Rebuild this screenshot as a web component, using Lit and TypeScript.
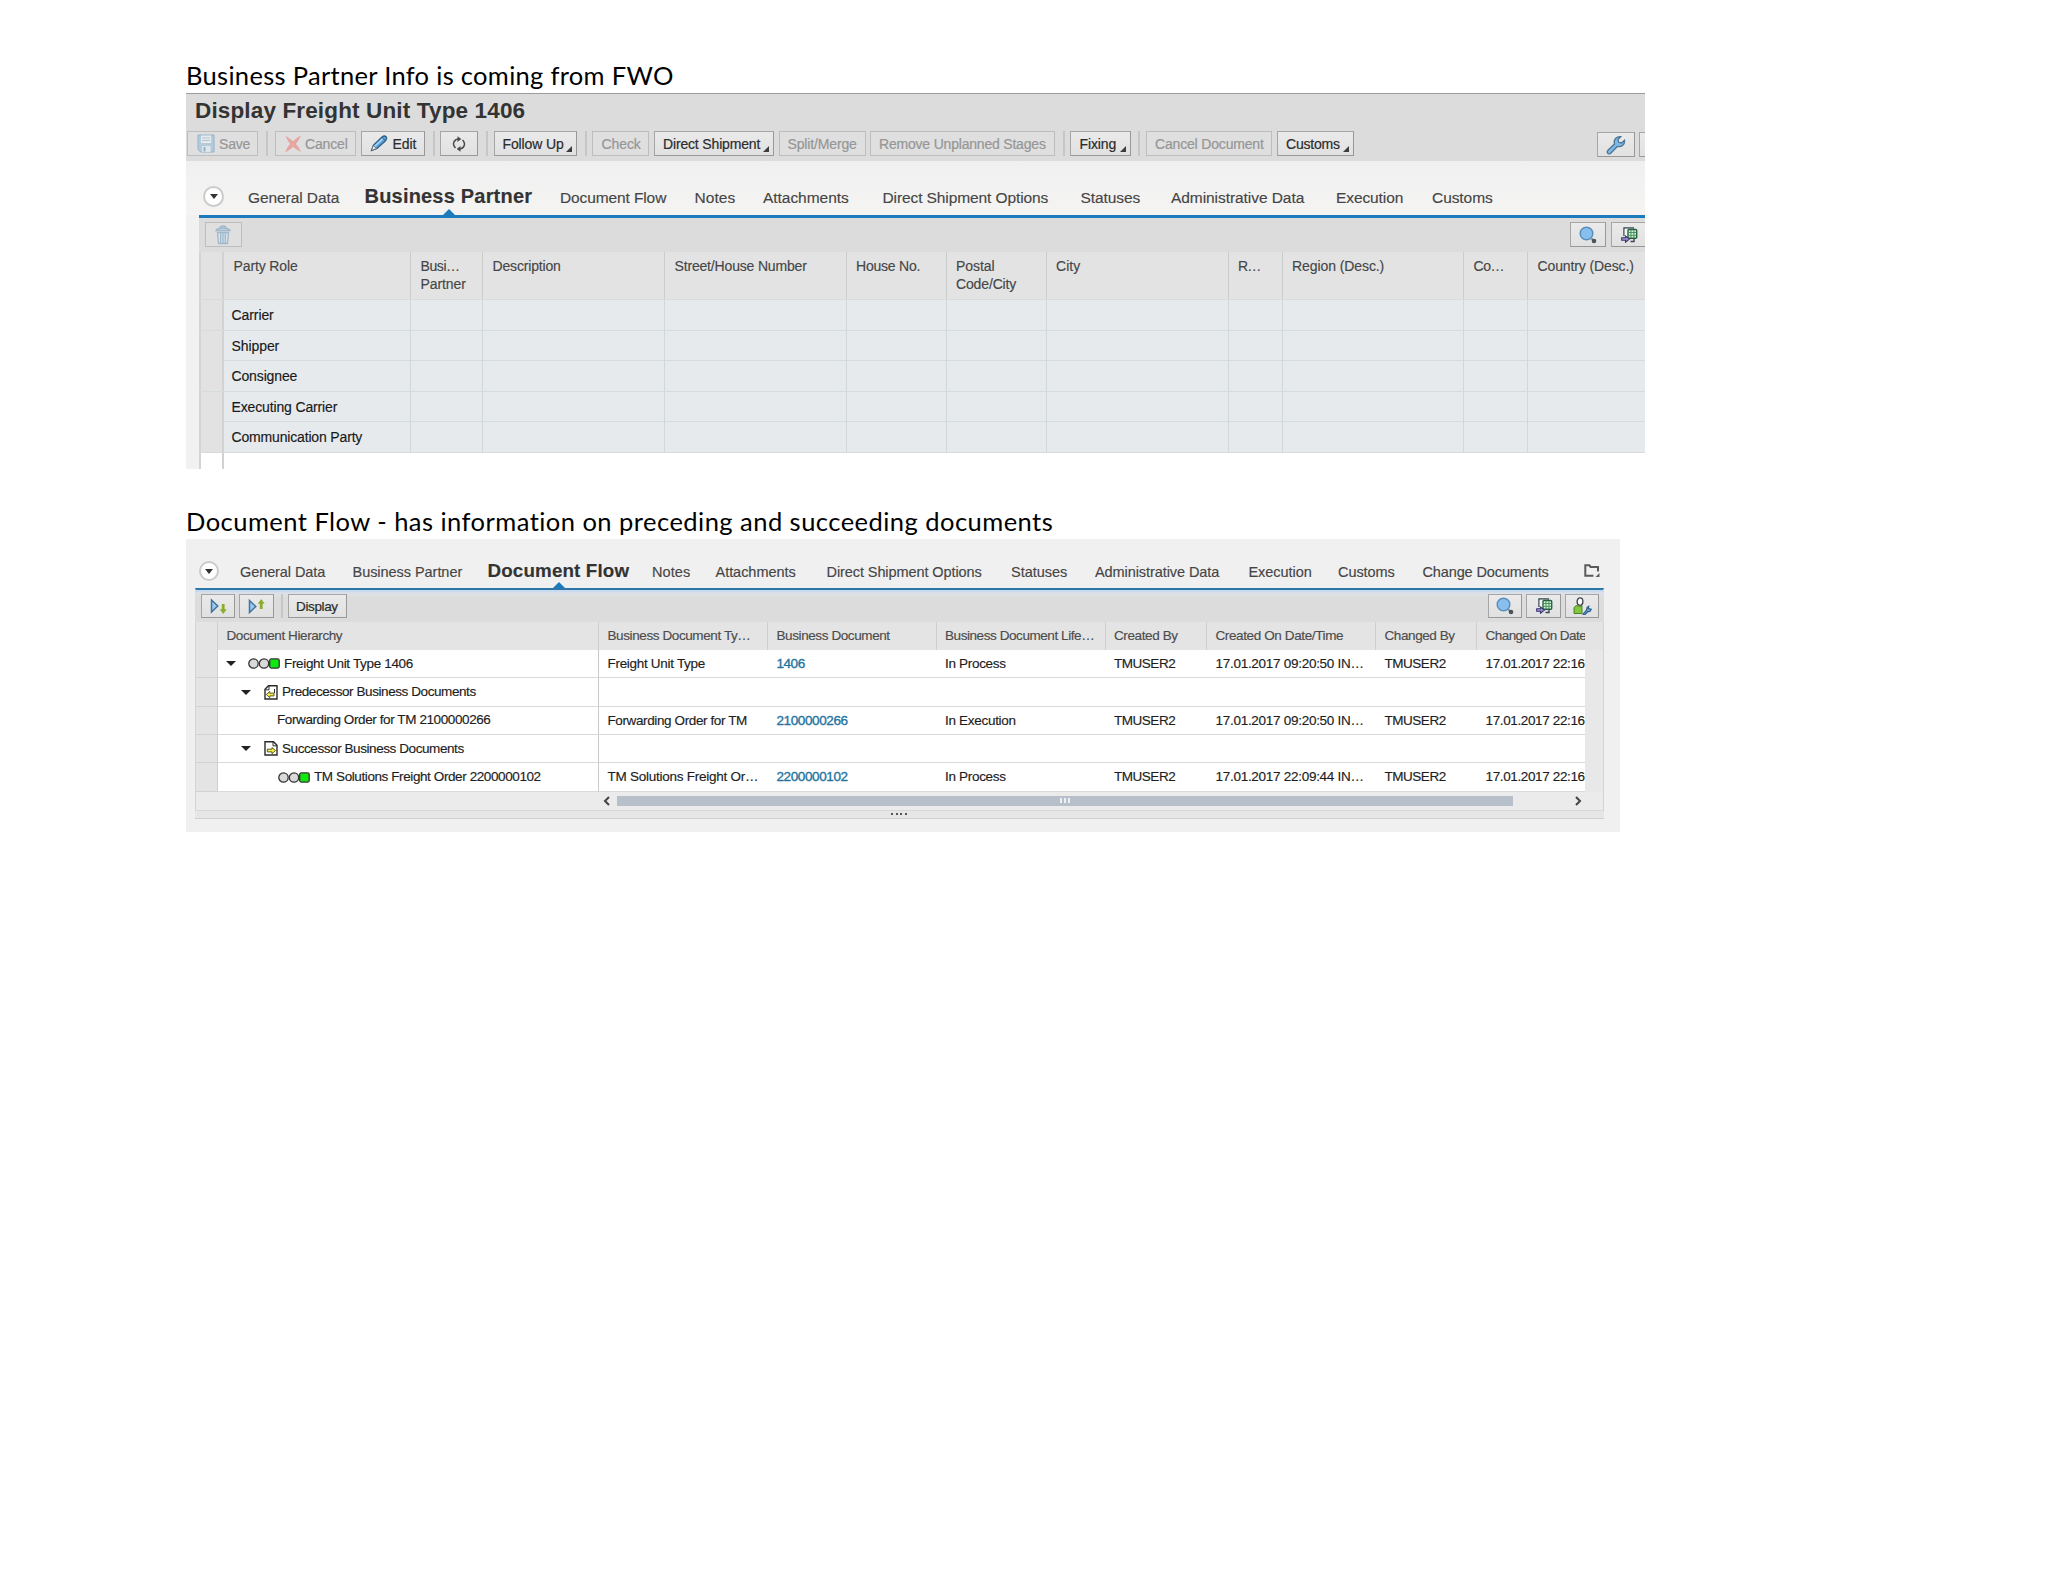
import { LitElement, html, css, svg, nothing } from "lit";
import { customElement, property } from "lit/decorators.js";

const SANS = '"Liberation Sans", Arial, sans-serif';
const ctx = document.createElement("canvas").getContext("2d")!;

/** Letter spacing that makes a label take the given width. */
function spacing(text: string, width: number, size: number, weight = 400, family = SANS): string {
  ctx.font = `${weight} ${size}px ${family}`;
  const natural = ctx.measureText(text).width;
  return `letter-spacing:${((width + 1.2 - natural) / text.length).toFixed(3)}px`;
}

type Label = [text: string, start: number, end: number];
type Tool = {
  sep?: boolean; at: number; w?: number; text?: string; tx?: number; tw?: number;
  icon?: string; ix?: number; off?: boolean; menu?: boolean; drop?: number;
};

const icons: Record<string, unknown> = {
  save: html`<svg width="18" height="19" viewBox="0 0 18 19">${svg`<path d="M1 1h16v17H3.5L1 15.5z" fill="#b4cbdc" stroke="#93b2ca"/><rect x="4" y="1.5" width="10" height="7.5" fill="#e4eaed"/><path d="M5 4h8M5 6.500h8" stroke="#b4c4cf"/><rect x="5" y="12" width="8.5" height="6" fill="#dfe7eb"/><rect x="6.5" y="13" width="2" height="4.5" fill="#93b2ca"/>`}</svg>`,
  cancel: html`<svg width="16" height="16" viewBox="0 0 16 16">${svg`<path d="M2 1.5Q6 4 8 6.5Q11 3 14.5 1Q12.5 5 10 8Q13 11 14.5 14.5Q11 12.500 8 9.700Q5 13 1.500 15Q3 11 6 8Q3.500 5 2 1.500z" fill="#e9aca7" stroke="#e5a39d" stroke-width="1.300"/>`}</svg>`,
  edit: html`<svg width="18" height="17" viewBox="0 0 18 17">${svg`<path d="M1.500 15.500L3.500 10L12 2Q14.500 0 16.300 2Q17.300 4 15.300 6L7 13.500z" fill="#5fa3d6" stroke="#2c5d86" stroke-width="1.200"/><path d="M4.500 11.500L13 3.500" stroke="#b9dcf5" stroke-width="1.300"/><path d="M12 2.500L15.500 5.700" stroke="#2c5d86"/><path d="M1.500 15.500L3.300 10.500L6.500 13.500z" fill="#f3f3f3" stroke="#555" stroke-width=".700"/>`}</svg>`,
  refresh: html`<svg width="16" height="16" viewBox="0 0 16 16">${svg`<g fill="none" stroke="#4a4a4a" stroke-width="1.500"><path d="M4.500 12Q1.500 9 3 5.800Q4.500 3 8 3"/><path d="M11.500 4Q14.500 7 13 10.200Q11.500 13 8 13"/></g><path d="M6.500 .200L10.300 3L6.500 6zM9.500 10L5.700 13L9.500 15.800z" fill="#4a4a4a"/>`}</svg>`,
  wrench: html`<svg width="20" height="20" viewBox="0 0 20 20">${svg`<path d="M2 18.500Q.500 17 2 15.300L8.500 9Q7.500 5.500 10 3Q12 1.200 14.800 1.700L12 4.500L12.700 7.300L15.500 8L18.500 5.200Q19 8.300 16.800 10.200Q14.500 12.300 11.300 11.500L5 18Q3.500 19.500 2 18.500z" fill="#7db9e6" stroke="#4d7594" stroke-width="1.300"/>`}</svg>`,
  trash: html`<svg width="16" height="20" viewBox="0 0 16 20">${svg`<g fill="none" stroke="#9fb9cb" stroke-width="1.300"><path d="M5 3Q5 1 8 1T11 3M1 5.500Q2 3 8 3T15 5.500z" fill="#c6d8e3"/><path d="M2.500 7.500L3.500 18.500H12.500L13.500 7.500z" fill="#d6e2ea"/><path d="M5.700 8v10M8 8v10M10.300 8v10"/></g>`}</svg>`,
  search: html`<svg width="18" height="18" viewBox="0 0 18 18">${svg`<path d="M12.500 12.500L13.500 13.500" stroke="#6b8494" stroke-width="2"/><circle cx="15" cy="15" r="2.300" fill="#4c5358"/><circle cx="7.500" cy="7.500" r="6.300" fill="#86bff0" stroke="#5c8fb8" stroke-width="1.500"/>`}</svg>`,
  export: html`<svg width="17" height="16" viewBox="0 0 17 16">${svg`<path d="M3 9V1H13M9.500 14.500H13V11" fill="none" stroke="#3b4854" stroke-width="1.400"/><path d="M3.700 1.700H12V10H9L6 8.500H3.700z" fill="#f6f8f8"/><rect x="7" y="2.500" width="8.700" height="8.700" rx="1" fill="#d3f0d5" stroke="#24613c" stroke-width="1.400"/><path d="M7.500 5.500h8M7.500 8.300h8M10 3v8M12.900 3v8" stroke="#3d8a57" stroke-width=".900"/><path d="M.700 10.800H4.500V9L8.500 12L4.500 15.200V13.300H.700z" fill="#9a92cf" stroke="#38386f" stroke-width="1.100"/>`}</svg>`,
  person: html`<svg width="19" height="18" viewBox="0 0 19 18">${svg`<path d="M1 16.500V11Q1.500 9 4 8.500L6.500 9.700L9 8.700V16.500z" fill="#84c541" stroke="#4a8523"/><ellipse cx="7" cy="4.600" rx="2.900" ry="3.700" fill="#fff" stroke="#39424a" stroke-width="1.300"/><path d="M10 17.200L13.800 13Q13.200 10.400 15.700 9.300L15.300 11.600L18.200 12.300Q17.500 14.800 15 14.500L11.800 17.700Z" fill="#6fb1e3" stroke="#2e618c" stroke-width="1.200"/>`}</svg>`,
  down: html`<svg width="17" height="17" viewBox="0 0 17 17">${svg`<path d="M1.500 2L7.800 8L1.500 14z" fill="#9cc9ee" stroke="#41749c" stroke-width="1.500"/><path d="M13.200 6v6" stroke="#8aae2c" stroke-width="2.800"/><path d="M9.800 11.300H16.700L13.200 16z" fill="#8aae2c"/>`}</svg>`,
  up: html`<svg width="17" height="17" viewBox="0 0 17 17">${svg`<path d="M1.500 2.500L7.800 8.500L1.500 14.500z" fill="#9cc9ee" stroke="#41749c" stroke-width="1.500"/><path d="M13.200 5v6" stroke="#8aae2c" stroke-width="2.800"/><path d="M9.800 5.700H16.700L13.200 1z" fill="#8aae2c"/>`}</svg>`,
  lights: html`<svg width="32" height="11" viewBox="0 0 32 11">${svg`<g stroke="#333" stroke-width="1.300"><circle cx="5.500" cy="5.500" r="4.700" fill="#d9d9d9"/><circle cx="16" cy="5.500" r="4.700" fill="#d9d9d9"/><rect x="21.700" y=".900" width="9.500" height="9.200" rx="1.500" fill="#0ee90e"/></g>`}</svg>`,
  pred: html`<svg width="14" height="15" viewBox="0 0 14 15">${svg`<path d="M4.500 .800H13V14H1V4.300z" fill="#fff" stroke="#2a2a2a" stroke-width="1.400"/><path d="M5 1V4.800H1.300" fill="none" stroke="#2a2a2a"/><path d="M2.300 9.500L5.800 6.500V8.200H10V10.900H5.800V12.700z" fill="#f4f04a" stroke="#4c4a1a" stroke-width=".900"/><path d="M10.500 4V8" stroke="#333"/>`}</svg>`,
  succ: html`<svg width="14" height="15" viewBox="0 0 14 15">${svg`<path d="M1 .800H9.500L13 4.300V14H1z" fill="#fff" stroke="#2a2a2a" stroke-width="1.400"/><path d="M9 1V4.800H12.700" fill="none" stroke="#2a2a2a"/><path d="M11.500 9.500L8 6.500V8.200H3.300V10.900H8V12.700z" fill="#f4f04a" stroke="#4c4a1a" stroke-width=".900"/>`}</svg>`,
  folder: html`<svg width="16" height="14" viewBox="0 0 16 14">${svg`<path d="M9.500 11.800H1.300V1.300H5.500L6.500 3H14V7.500" fill="none" stroke="#5a5a5a" stroke-width="2"/><path d="M15.500 9V13H11.500z" fill="#5a5a5a"/>`}</svg>`,
};

const bars = {
  main: [
    { at: 1, w: 71, off: true, icon: "save", ix: 10, text: "Save", tx: 33, tw: 30 },
    { sep: true, at: 80 },
    { at: 89, w: 81, off: true, icon: "cancel", ix: 10, text: "Cancel", tx: 31, tw: 41.5 },
    { at: 175, w: 64, icon: "edit", ix: 9, text: "Edit", tx: 32.5, tw: 22.5 },
    { sep: true, at: 247 },
    { at: 254, w: 38, icon: "refresh", ix: 11 },
    { sep: true, at: 300 },
    { at: 308, w: 83, text: "Follow Up", tx: 9.5, tw: 60, menu: true },
    { sep: true, at: 399 },
    { at: 406, w: 57, off: true, text: "Check", tx: 10.5, tw: 38 },
    { at: 468, w: 120, text: "Direct Shipment", tx: 10, tw: 96, menu: true },
    { at: 593, w: 87, off: true, text: "Split/Merge", tx: 9.5, tw: 68 },
    { at: 684, w: 185, off: true, text: "Remove Unplanned Stages", tx: 10, tw: 165.5 },
    { sep: true, at: 877 },
    { at: 884, w: 61, text: "Fixing", tx: 10.5, tw: 35.5, menu: true },
    { sep: true, at: 952 },
    { at: 960, w: 126, off: true, text: "Cancel Document", tx: 10, tw: 107.5 },
    { at: 1091, w: 77, text: "Customs", tx: 10, tw: 52.5, menu: true },
    { at: 1411, w: 38, icon: "wrench", ix: 9, drop: 1 },
    { at: 1453, w: 38, drop: 1 },
  ] as Tool[],
  partner: [
    { at: 6, w: 37, off: true, icon: "trash", ix: 10 },
    { at: 1371, w: 36, icon: "search", ix: 9 },
    { at: 1412, w: 38, icon: "export", ix: 10 },
  ] as Tool[],
  flow: [
    { at: 6, w: 34, icon: "down", ix: 9 },
    { at: 44, w: 35, icon: "up", ix: 9 },
    { sep: true, at: 86 },
    { at: 93, w: 59, text: "Display", tx: 9, tw: 40.500 },
    { at: 1293, w: 34, icon: "search", ix: 8 },
    { at: 1331, w: 35, icon: "export", ix: 10 },
    { at: 1370, w: 34, icon: "person", ix: 8 },
  ] as Tool[],
};

const partnerTabs: Label[] = [
  ["General Data", 63, 153], ["Business Partner", 179.5, 346], ["Document Flow", 375, 480],
  ["Notes", 509.5, 549], ["Attachments", 578, 662.5], ["Direct Shipment Options", 697.5, 862],
  ["Statuses", 895.5, 954], ["Administrative Data", 986, 1118], ["Execution", 1151, 1217], ["Customs", 1247, 1306.5],
];
const flowTabs: Label[] = [
  ["General Data", 55, 139], ["Business Partner", 167.5, 276], ["Document Flow", 302.5, 443],
  ["Notes", 467, 504], ["Attachments", 530.5, 609.5], ["Direct Shipment Options", 641.5, 795.5],
  ["Statuses", 826, 881], ["Administrative Data", 910, 1033], ["Execution", 1063.5, 1125.5],
  ["Customs", 1153, 1208.5], ["Change Documents", 1237.5, 1362.5],
];

const partnerHead: [string, number][][] = [
  [["Party Role", 63]], [["Busi…", 38], ["Partner", 44]], [["Description", 67]],
  [["Street/House Number", 131]], [["House No.", 63]], [["Postal", 37.5], ["Code/City", 59]],
  [["City", 23]], [["R…", 21]], [["Region (Desc.)", 91]], [["Co…", 29.5]], [["Country (Desc.)", 95]],
];
const partnerRows: [string, number][] = [
  ["Carrier", 41], ["Shipper", 46.5], ["Consignee", 64.5], ["Executing Carrier", 104.5], ["Communication Party", 129.5],
];

const flowHead: [string, number][] = [
  ["Document Hierarchy", 114.5], ["Business Document Ty…", 142], ["Business Document", 112],
  ["Business Document Life…", 148], ["Created By", 62.5], ["Created On Date/Time", 126.5],
  ["Changed By", 69], ["Changed On Date", 99.5],
];
type FlowRow = { pad: number; arrow?: boolean; icon?: string; gap?: number; label: [string, number]; cells: [string, number][] };
const user: [string, number] = ["TMUSER2", 60];
const changed: [string, number] = ["17.01.2017 22:16", 98];
const flowRows: FlowRow[] = [
  { pad: 7.5, arrow: true, icon: "lights", gap: 12.5, label: ["Freight Unit Type 1406", 128],
    cells: [["Freight Unit Type", 96.5], ["1406", 27], ["In Process", 59.5], user, ["17.01.2017 09:20:50 IN…", 147], user, changed] },
  { pad: 22.5, arrow: true, icon: "pred", gap: 13, label: ["Predecessor Business Documents", 192.5], cells: [] },
  { pad: 59, label: ["Forwarding Order for TM 2100000266", 212.5],
    cells: [["Forwarding Order for TM", 138.5], ["2100000266", 70], ["In Execution", 69.5], user, ["17.01.2017 09:20:50 IN…", 147], user, changed] },
  { pad: 22.5, arrow: true, icon: "succ", gap: 13, label: ["Successor Business Documents", 180.5], cells: [] },
  { pad: 60, icon: "lights", label: ["TM Solutions Freight Order 2200000102", 225.5],
    cells: [["TM Solutions Freight Or…", 149.5], ["2200000102", 70], ["In Process", 59.5], user, ["17.01.2017 22:09:44 IN…", 147], user, changed] },
];

const shared = css`
  :host { display: block; font-family: "Liberation Sans", Arial, sans-serif; }
  * { box-sizing: border-box; }
  svg { display: block; flex: none; }
  span { white-space: nowrap; }
`;

@customElement("tool-bar")
export class ToolBar extends LitElement {
  @property({ attribute: false }) items: Tool[] = [];
  @property({ type: Number }) size = 14;
  static styles = [shared, css`
    .bar { display: flex; align-items: flex-start; overflow: hidden; }
    .btn { display: flex; align-items: center; flex: none; height: var(--btn-h, 25px); border: 1px solid #a6a6a6; border-right-color: #989898; border-bottom-color: #989898;
      background: linear-gradient(#eaeaea, #e1e1e1); color: #2c2c2c; position: relative; -webkit-text-stroke: 0.2px currentColor; }
    .off { border-color: #bdbdbd; background: #dfdfdf; color: #969696; }
    .drop { margin-top: 1px; }
    .sep { flex: none; width: 2px; height: var(--btn-h, 25px); background: #c6c6c6; }
    .corner { position: absolute; right: 4px; bottom: 3px; width: 0; height: 0; border-left: 6px solid transparent; border-bottom: 6px solid #3c3c3c; }
  `];
  render() {
    let end = 0;
    return html`<div class="bar">${this.items.map((t) => {
      const gap = t.at - end;
      end = t.at + (t.sep ? 2 : t.w!);
      if (t.sep) return html`<div class="sep" style="margin-left:${gap}px"></div>`;
      const textGap = t.text ? t.tx! - 2 - (t.icon ? t.ix! + (t.icon === "cancel" ? 15 : 17) : 0) : 0;
      return html`<div class="btn ${t.off ? "off" : ""} ${t.drop ? "drop" : ""}" style="margin-left:${gap}px;width:${t.w}px">
        ${t.icon ? html`<div style="margin-left:${t.ix! - 1}px">${icons[t.icon]}</div>` : nothing}
        ${t.text ? html`<span style="margin-left:${textGap}px;font-size:${this.size}px;${spacing(t.text, t.tw!, this.size)}">${t.text}</span>` : nothing}
        ${t.menu ? html`<i class="corner"></i>` : nothing}
      </div>`;
    })}</div>`;
  }
}

@customElement("tab-strip")
export class TabStrip extends LitElement {
  @property({ attribute: false }) tabs: Label[] = [];
  @property() active = "";
  @property({ type: Boolean, reflect: true }) small = false;
  static styles = [shared, css`
    .strip { display: flex; align-items: flex-start; height: 54px; padding: 20px 0 0 17px; color: #454545; }
    .tab { flex: none; font-size: 15.5px; line-height: 33px; position: relative; height: 34px; -webkit-text-stroke: 0.15px currentColor; }
    .on { font-size: 20px; font-weight: 700; line-height: 31px; color: #333; }
    .on::after { content: ""; position: absolute; left: calc(50% - 6px); bottom: 0; border: 6px solid transparent; border-top: 0; border-bottom: 6px solid #1b7bbd; }
    .menu { flex: none; width: 21px; height: 21px; margin-top: 5px; border-radius: 50%; border: 2px solid #cbcbcb; background: #fff; display: flex; align-items: center; justify-content: center; }
    .menu::after { content: ""; border: 4.5px solid transparent; border-top: 5px solid #333; border-bottom: 0; }
    .folder { margin: 6px 0 0 35px; }
    :host([small]) .strip { height: 49px; padding: 19px 0 0 13px; }
    :host([small]) .tab { font-size: 14.5px; line-height: 28px; height: 30px; }
    :host([small]) .on { font-size: 18.8px; line-height: 25px; }
    :host([small]) .menu { width: 20px; height: 20px; margin-top: 3px; }
  `];
  render() {
    const small = this.small;
    let end = small ? 33 : 38;
    return html`<div class="strip"><div class="menu"></div>${this.tabs.map(([text, a, b]) => {
      const on = text === this.active;
      const size = on ? (small ? 18.8 : 20) : small ? 14.5 : 15.5;
      const gap = a - 1 - end;
      end = b + 0.5;
      return html`<div class="tab ${on ? "on" : ""}" style="margin-left:${gap}px;width:${b - a + 1.5}px"><span style=${spacing(text, b - a, size, on ? 700 : 400)}>${text}</span></div>`;
    })}${small ? html`<div class="folder">${icons.folder}</div>` : nothing}</div>`;
  }
}

@customElement("app-root")
export class AppRoot extends LitElement {
  static styles = [shared, css`
    :host { background: #fff; min-height: 1582px; padding: 57px 0 0 186px; }
    .note { font-family: Lato, sans-serif; font-size: 25.5px; line-height: 36px; height: 36px; color: #000; }
    .second { margin-top: 34px; }
    .partner { width: 1459px; height: 376px; overflow: hidden; background: #f1f1f1; border-top: 1px solid #9c9c9c; }
    .title { height: 34px; line-height: 34px; font-size: 22.5px; font-weight: 700; color: #333; padding-left: 9px; background: #dcdcdc; }
    .actions { height: 33px; padding-top: 3px; background: #dcdcdc; }
    .partner tab-strip { background: linear-gradient(#f0f0f0, #f5f4f3); }
    .grid { margin-left: 13px; border-top: 3px solid #1b7bbd; }
    .tools { height: 34px; padding-top: 4px; background: #dcdcdc; }
    .row { display: grid; grid-template-columns: 25px 187px 72px 182px 181.5px 100px 100px 182px 54px 181.500px 64px 118px; height: 30.6px; border-bottom: 1px solid #d6dbdd; background: #e6eaec; font-size: 14px; line-height: 30px; color: #191919; -webkit-text-stroke: 0.15px currentColor; }
    .row > div { border-right: 1px solid #d2d8da; padding-left: 7.5px; }
    .row > .gut { background: #e2e2e2; border-left: 2px solid #d4d4d4; border-right: 2px solid #d2d2d2; padding: 0; }
    .head { height: 48px; background: #e3e3e3; color: #464646; line-height: 18px; }
    .head > div { padding: 5px 0 0 9.5px; border-right-color: #cbcdcd; display: flex; flex-direction: column; }
    .blank { height: 17px; border: 0; background: #fff; }
    .blank > div { border-right: 0; }
    .blank > .gut { background: #fff; }
    .flow { width: 1434px; height: 293px; background: #f0f0f0; padding-right: 16px; }
    .doc { margin-left: 9px; border-top: 2px solid #2f76a8; height: 231px; background: #e8e8e8; border-left: 1px solid #d4d4d4; border-right: 1px solid #d4d4d4; border-bottom: 2px solid #d4d4d4; }
    .flow .tools { height: 32px; background: linear-gradient(#c3d9ef 0 1px, #dde2e8 3px, #dcdcdc 8px); margin: 0 -1px; --btn-h: 24px; }
    .frow { display: grid; grid-template-columns: 22px 381px 169px 168.5px 169px 101.5px 169px 101px 108px; width: 1389px; height: 28.35px; font-size: 13.5px; line-height: 28px; color: #1d1d1d; -webkit-text-stroke: 0.15px currentColor; }
    .frow > div { border-bottom: 1px solid #dadada; background: #fff; padding-left: 8.5px; overflow: hidden; }
    .frow > .gut { background: #e4e4e4; border-right: 1px solid #cfcfcf; border-bottom-color: #d2d2d2; }
    .frow > .tree { border-right: 1px solid #c9c9c9; display: flex; align-items: center; }
    .fhead { height: 28px; line-height: 27px; color: #4c4c4c; width: auto; }
    .fhead > div { background: #e4e4e4; border-right: 1px solid #cfcfcf; border-bottom: 0; }
    .fhead > div:last-child { border-right: 0; }
    .wrap { background: #e4e4e4; }
    .link { color: #23749f; -webkit-text-stroke: 0.35px #23749f; }
    .arrow { border: 5px solid transparent; border-top: 5px solid #222; border-bottom: 0; width: 10px; }
    .scroll { display: flex; align-items: center; height: 18px; padding-left: 407px; background: #ebebeb; }
    .thumb { width: 896px; height: 10px; margin-left: 6px; background: #b7bfca; display: flex; justify-content: center; gap: 2px; align-items: center; }
    .thumb i { width: 2px; height: 5px; background: #eef0f3; }
    .right { margin-left: 61px; }
    .foot { height: 9px; border-top: 1px solid #d8d8d8; border-bottom: 1px solid #d0d0d0; display: flex; gap: 2.500px; padding: 2px 0 0 696px; background: #e6e6e6; margin: 0 -1px; }
    .doc { height: auto; border-bottom: 0; }
    .foot i { width: 2px; height: 2px; background: #555; }
  `];

  private line(text: string, width: number, size: number, cls = "") {
    return html`<span class=${cls} style=${spacing(text, width, size)}>${text}</span>`;
  }

  render() {
    const lato = "Lato, sans-serif";
    const note1 = "Business Partner Info is coming from FWO";
    const note2 = "Document Flow - has information on preceding and succeeding documents";
    const title = "Display Freight Unit Type 1406";
    return html`
      <div class="note"><span style=${spacing(note1, 487, 25.5, 400, lato)}>${note1}</span></div>
      <section class="partner">
        <div class="title"><span style=${spacing(title, 329, 22.5, 700)}>${title}</span></div>
        <div class="actions"><tool-bar .items=${bars.main}></tool-bar></div>
        <tab-strip .tabs=${partnerTabs} active="Business Partner"></tab-strip>
        <div class="grid">
          <div class="tools"><tool-bar .items=${bars.partner}></tool-bar></div>
          <div class="row head"><div class="gut"></div>${partnerHead.map((c) => html`<div>${c.map(([t, w]) => this.line(t, w, 14))}</div>`)}</div>
          ${partnerRows.map(([t, w]) => html`<div class="row"><div class="gut"></div><div>${this.line(t, w, 14)}</div>${partnerHead.slice(1).map(() => html`<div></div>`)}</div>`)}
          <div class="row blank"><div class="gut"></div></div>
        </div>
      </section>
      <div class="note second"><span style=${spacing(note2, 867, 25.5, 400, lato)}>${note2}</span></div>
      <section class="flow">
        <tab-strip small .tabs=${flowTabs} active="Document Flow"></tab-strip>
        <div class="doc">
          <div class="tools"><tool-bar .items=${bars.flow} size="13.5"></tool-bar></div>
          <div class="wrap"><div class="frow fhead"><div class="gut"></div>${flowHead.map(([t, w]) => html`<div>${this.line(t, w, 13.5)}</div>`)}</div></div>
          ${flowRows.map((r) => html`<div class="frow"><div class="gut"></div>
            <div class="tree" style="padding-left:${r.pad}px">
              ${r.arrow ? html`<i class="arrow"></i>` : nothing}
              ${r.icon ? html`<div style="margin:0 ${r.icon === "lights" ? 4 : 4.5}px 0 ${r.gap ?? 0}px">${icons[r.icon]}</div>` : nothing}
              ${this.line(r.label[0], r.label[1], 13.5)}
            </div>
            ${flowHead.slice(1).map((_, i) => html`<div>${r.cells[i] ? this.line(r.cells[i][0], r.cells[i][1], 13.5, i === 1 ? "link" : "") : nothing}</div>`)}
          </div>`)}
          <div class="scroll">
            <svg width="8" height="10" viewBox="0 0 8 10"><path d="M6 1L2 5L6 9" fill="none" stroke="#444" stroke-width="2"/></svg>
            <div class="thumb"><i></i><i></i><i></i></div>
            <svg class="right" width="8" height="10" viewBox="0 0 8 10"><path d="M2 1L6 5L2 9" fill="none" stroke="#444" stroke-width="2"/></svg>
          </div>
          <div class="foot"><i></i><i></i><i></i><i></i></div>
        </div>
      </section>`;
  }
}
